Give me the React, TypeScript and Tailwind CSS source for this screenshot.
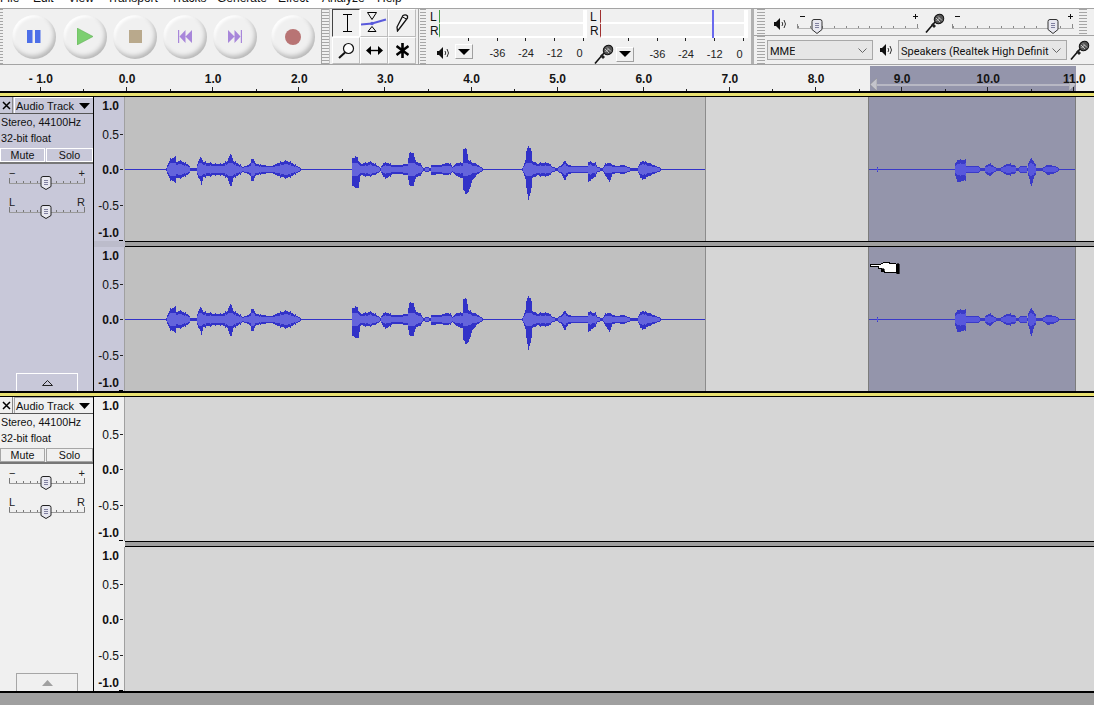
type Pt = [number, number, number];

const clipOne: Pt[] = [
  [125, 0, 0], [165, 0, 0], [166, 1, 1], [168, 6, 6], [170, 10, 10], [175, 12, 12], [176, 7, 8], [180, 8, 8], [184, 6, 6], [188, 4, 4], [190, 1, 1],
  [196, 1, 1], [198, 8, 8], [200, 11, 10], [201, 11, 15], [203, 7, 7], [208, 6, 6], [214, 5, 5], [222, 5, 5], [227, 8, 8], [229, 13, 14], [231, 14, 16], [233, 8, 8], [238, 5, 5], [242, 2, 2],
  [245, 3, 3], [250, 5, 5], [251, 10, 11], [253, 10, 11], [255, 5, 5], [262, 4, 4], [268, 3, 3], [272, 3, 3], [278, 6, 6], [285, 8, 8], [290, 7, 7], [296, 3, 3], [300, 1, 1], [301, 0, 0],
  [351, 0, 0], [352, 11, 16], [357, 12, 18], [358, 8, 18], [360, 5, 5], [366, 6, 6], [370, 7, 6], [376, 4, 4], [380, 1, 1], [383, 6, 7], [387, 6, 8], [392, 4, 4], [398, 4, 4], [407, 5, 5], [409, 16, 15], [413, 16, 16], [415, 8, 8], [420, 5, 5], [423, 1, 1], [426, 2, 2], [430, 1, 1], [431, 4, 5], [440, 4, 4], [446, 6, 5], [450, 5, 4], [452, 2, 2], [456, 6, 6], [462, 6, 8], [463, 20, 20], [466, 20, 24], [468, 9, 22], [472, 6, 10], [476, 5, 5], [480, 2, 2], [482, 1, 1], [483, 0, 0],
  [521, 0, 0], [522, 1, 1], [525, 8, 8], [526, 18, 18], [528, 23, 30], [531, 18, 18], [532, 8, 8], [537, 5, 5], [540, 6, 6], [548, 6, 6], [552, 2, 2], [556, 1, 1], [557, 1, 1], [561, 4, 4], [564, 8, 10], [568, 4, 4], [573, 3, 3], [587, 3, 3], [588, 7, 12], [595, 6, 6], [597, 2, 2], [602, 1, 1], [605, 5, 5], [609, 6, 12], [612, 4, 4], [617, 3, 3], [623, 4, 4], [628, 2, 2], [630, 1, 1], [637, 1, 1], [639, 5, 5], [642, 8, 10], [648, 6, 6], [653, 4, 4], [658, 2, 2], [660, 1, 1], [661, 0, 0], [705, 0, 0],
];

const clipTwo: Pt[] = [
  [869, 0, 0], [876, 0, 0], [877, 2, 2], [878, 0, 0], [954, 0, 0], [955, 5, 5], [957, 9, 12], [965, 9, 10], [966, 3, 3], [978, 3, 3], [980, 1, 1], [984, 1, 1], [986, 4, 4], [989, 5, 6], [993, 3, 3], [996, 1, 1], [1000, 1, 1], [1003, 3, 3], [1007, 5, 5], [1014, 4, 4], [1016, 1, 1], [1018, 1, 1], [1020, 3, 3], [1026, 3, 3], [1027, 1, 1], [1028, 6, 6], [1031, 11, 16], [1034, 6, 6], [1036, 1, 1], [1042, 1, 1], [1045, 3, 3], [1047, 4, 5], [1055, 3, 3], [1058, 1, 1], [1059, 0, 0], [1075, 0, 0],
];

function buildWave(points: Pt[], x0: number) {
  let outer = "";
  let inner = "";
  for (let i = 0; i < points.length - 1; i++) {
    const [xa, ta, ba] = points[i];
    const [xb, tb, bb] = points[i + 1];
    for (let x = xa; x < xb; x++) {
      const k = (x - xa) / (xb - xa);
      const wobble = ta > 4 && (x * 7) % 5 === 0 ? 1 : 0;
      const t = Math.round(ta + (tb - ta) * k) + wobble;
      const b = Math.round(ba + (bb - ba) * k) + wobble;
      const px = x - x0;
      outer += `M${px} ${72 - t}h1V${73 + b}h-1z`;
      if (t >= 2) {
        const r = Math.min(Math.round(t * 0.58), 6);
        inner += `M${px} ${72 - r}h1V${73 + r}h-1z`;
      }
    }
  }
  return { outer, inner };
}

function Wave({ points, x0, width, selected }: { points: Pt[]; x0: number; width: number; selected?: boolean }) {
  const { outer, inner } = buildWave(points, x0);
  return (
    <svg width={width} height={144} className="block" shapeRendering="crispEdges">
      <path d={outer} fill={selected ? "#3a3ac8" : "#3232c8"} />
      <path d={inner} fill={selected ? "#5858dc" : "#6464dc"} />
    </svg>
  );
}

function Grip({ className }: { className: string }) {
  return <div className={`bg-[repeating-linear-gradient(to_bottom,#a6a6a6_0,#a6a6a6_1px,#f0f0f0_1px,#f0f0f0_3px)] ${className}`} />;
}

function RoundButton({ children, className = "" }: { children: React.ReactNode; className?: string }) {
  return (
    <div className={`flex h-[44px] w-[44px] shrink-0 items-center justify-center rounded-full bg-[#f0f0f0] shadow-[inset_-2px_-3px_4px_#b8b8b8,inset_2px_2px_3px_#ffffff] ${className}`}>
      {children}
    </div>
  );
}

function Speaker({ className = "" }: { className?: string }) {
  return (
    <svg width="13" height="14" viewBox="0 0 13 14" className={`shrink-0 ${className}`}>
      <path d="M0 5h2l4-4v12l-4-4H0z" fill="#111" />
      <path d="M8 5q1.500 2 0 4M10 3q3 4 0 8" fill="none" stroke="#333" />
    </svg>
  );
}

function Mic({ className = "" }: { className?: string }) {
  return (
    <svg width="20" height="20" viewBox="0 0 20 20" className={`shrink-0 ${className}`}>
      <path d="M1 19.500 10 9" stroke="#111" strokeWidth="1.600" />
      <path d="M6 12 9 15 11 13 8 10z" fill="#222" />
      <ellipse cx="14" cy="6" rx="4.500" ry="5" transform="rotate(45 14 6)" fill="#555" stroke="#111" />
      <path d="M11 5 15 9M13 3.500 17 7.500M11.500 8l3-3" stroke="#ddd" strokeWidth=".8" />
    </svg>
  );
}

function DropButton() {
  return (
    <div className="flex h-[15px] w-[18px] items-center justify-center border border-t-white border-l-white border-r-[#a0a0a0] border-b-[#a0a0a0]">
      <svg width="12" height="6" viewBox="0 0 12 6">
        <path d="M0 0h12L6 6z" fill="#000" />
      </svg>
    </div>
  );
}

function MeterBar({ label, lineColor, labelWidth, peak }: { label: string; lineColor: string; labelWidth: string; peak?: boolean }) {
  return (
    <div className="flex h-[14px]">
      <div className={`text-[12px] leading-[14px] text-[#111] ${labelWidth}`}>{label}</div>
      <div className={`relative w-[146px] border-b-2 border-l border-r-2 border-b-white border-r-white ${lineColor}`}>
        {peak ? <div className="absolute left-[111px] top-0 bottom-[-2px] w-[2px] bg-[#6a6aee]" /> : null}
      </div>
      <div className="w-[2px] border-r-2 border-white" />
    </div>
  );
}

function Meter({ redLine, icon }: { redLine?: boolean; icon: React.ReactNode }) {
  const labels = ["-36", "-24", "-12"];
  const line = redLine ? "border-l-[#a03030]" : "border-l-[#40a040]";
  const labelWidth = redLine ? "w-[10px]" : "w-[9px]";
  return (
    <div className="flex w-[160px] shrink-0 flex-col pt-[1px]">
      <MeterBar label="L" lineColor={line} labelWidth={labelWidth} peak={redLine} />
      <MeterBar label="R" lineColor={line} labelWidth={labelWidth} peak={redLine} />
      <div className="flex h-[4px] pl-[24px]">
        {[0, 1, 2, 3, 4].map((n) => (
          <div key={n} className="flex w-[28.7px] shrink-0 justify-center">
            <div className="h-[3px] w-px bg-[#222]" />
          </div>
        ))}
      </div>
      <div className="flex items-center pt-[3px]">
        <div className="flex w-[53px] shrink-0 items-center">{icon}</div>
        {labels.map((l) => (
          <div key={l} className="w-[28.7px] shrink-0 text-center text-[11px] leading-[14px] text-[#222]">
            {l}
          </div>
        ))}
        <div className="w-[21px] shrink-0 text-center text-[11px] leading-[14px] text-[#222]">0</div>
      </div>
    </div>
  );
}

function MixerSlider({ thumb }: { thumb: number }) {
  const width = 122;
  const ticks = Array.from({ length: 11 }, (_, i) => 1 + (i * (width - 3)) / 10);
  return (
    <svg width={width} height={22} viewBox={`0 0 ${width} 22`} className="shrink-0" shapeRendering="crispEdges">
      <path d="M3 4.500h5M116 4.500h5M118.500 2v5" stroke="#111" />
      <path d={`M0 16.500H${width}`} stroke="#b4b4b4" />
      {ticks.map((t) => (
        <path key={t} d={`M${Math.round(t)} 13.500v2`} stroke="#888" />
      ))}
      <path d="M0 12v4M120 12v4" stroke="#888" />
      <g shapeRendering="auto">
        <path d={`M${thumb - 5} 9.500q0-2 2-2h6q2 0 2 2v8l-5 4-5-4z`} fill="#e8e8f0" stroke="#333" />
        <path d={`M${thumb - 2} 11.500h4M${thumb - 2} 13.500h4M${thumb - 2} 15.500h4`} stroke="#8080a0" />
      </g>
    </svg>
  );
}

function PanelSlider({ left, right, className }: { left: string; right: string; className: string }) {
  return (
    <div className={`ml-[9px] w-[76px] ${className}`}>
      <div className="flex h-[12px] justify-between text-[11px] leading-[12px] text-[#222]">
        <span>{left}</span>
        <span>{right}</span>
      </div>
      <svg width={76} height={15} viewBox="0 0 76 15" className="-mt-[4px] block" shapeRendering="crispEdges">
        <path d="M0 8.500H76" stroke="#9a9a9a" />
        {[7, 14, 21, 28, 47, 54, 61, 68].map((t) => (
          <path key={t} d={`M${t} 5.500v2`} stroke="#777" />
        ))}
        <path d="M.5 3v5M75.500 3v5" stroke="#777" />
        <g shapeRendering="auto">
          <path d="M32 3.500q0-2 2-2h6q2 0 2 2v8l-5 3-5-3z" fill="#e8e8f0" stroke="#222" />
          <path d="M35 5.500h4M35 7.500h4M35 9.500h4" stroke="#8080a0" />
        </g>
      </svg>
    </div>
  );
}

function Combo({ text, className }: { text: string; className: string }) {
  return (
    <div className={`flex h-[20px] shrink-0 items-center justify-between border border-[#a8a8a8] bg-[#e6e6e6] pl-[2px] pr-[5px] text-[11px] text-[#111] [font-family:Roboto,sans-serif] ${className}`}>
      <span className="mt-[2px] overflow-hidden whitespace-nowrap leading-none">{text}</span>
      <svg width="9" height="5" viewBox="0 0 9 5" className="ml-[3px] shrink-0">
        <path d="M.5.500 4.500 4.500 8.500.5" fill="none" stroke="#666" />
      </svg>
    </div>
  );
}

function ToolCell({ active, children }: { active?: boolean; children: React.ReactNode }) {
  return (
    <div
      className={`flex items-center justify-center border ${
        active ? "border-t-[#444] border-l-[#444] border-r-white border-b-white" : "border-t-white border-l-white border-r-[#bcbcbc] border-b-[#bcbcbc]"
      }`}
    >
      {children}
    </div>
  );
}

function Toolbar() {
  return (
    <div className="flex h-[57px] border-y border-[#a4a4a4] bg-[#f0f0f0]">
      <div className="flex w-[322px] shrink-0 border-r border-[#a4a4a4]">
        <Grip className="w-[3px]" />
        <div className="flex items-center pl-[9px]">
          <RoundButton>
            <svg width="14" height="13" viewBox="0 0 14 13">
              <path d="M0 0h5.500v13H0zM8 0h5.500v13H8z" fill="#4d6fe8" />
            </svg>
          </RoundButton>
          <RoundButton className="ml-[7px]">
            <svg width="16" height="17" viewBox="0 0 16 17">
              <path d="M0 0l16 8.500L0 17z" fill="#7ccf70" stroke="#62b058" strokeWidth=".6" />
            </svg>
          </RoundButton>
          <RoundButton className="ml-[6px]">
            <div className="h-[13px] w-[13px] bg-[#b9a98c]" />
          </RoundButton>
          <RoundButton className="ml-[6px]">
            <svg width="14" height="13" viewBox="0 0 14 13">
              <path d="M0 0h1.200v13H0zM1.500 6.500 7.500 0v13zM7.500 6.500 14 0v13z" fill="#a886da" />
            </svg>
          </RoundButton>
          <RoundButton className="ml-[6px]">
            <svg width="14" height="13" viewBox="0 0 14 13">
              <path d="M12.800 0H14v13h-1.200zM12.500 6.500 6.500 0v13zM6.500 6.500 0 0v13z" fill="#a886da" />
            </svg>
          </RoundButton>
          <RoundButton className="ml-[14px]">
            <div className="h-[16px] w-[16px] rounded-full bg-[#b87474]" />
          </RoundButton>
        </div>
      </div>

      <div className="flex w-[97px] shrink-0 border-r border-[#a4a4a4]">
        <Grip className="w-[8px] border-r border-[#c4c4c4]" />
        <div className="ml-[2px] grid w-[84px] grid-cols-3 grid-rows-2">
          <ToolCell active>
            <svg width="11" height="18" viewBox="0 0 11 18" className="ml-[3px]">
              <path d="M1 .500h9M5.500.5v17M1 17.500h9" stroke="#000" fill="none" />
            </svg>
          </ToolCell>
          <ToolCell>
            <svg width="26" height="24" viewBox="0 0 26 24">
              <path d="M6.500 1.500h9l-4.500 7zM7 20.500h8l-4-5z" fill="none" stroke="#000" />
              <path d="M0 13.500l11-1 14-4" stroke="#5a5adc" strokeWidth="2.200" fill="none" />
              <circle cx="11" cy="12.500" r="1.800" fill="#5a5adc" />
            </svg>
          </ToolCell>
          <ToolCell>
            <svg width="14" height="19" viewBox="0 0 14 19">
              <path d="M4.500 15.500 2.500 18 2 14 8 2.500q2.500-1.500 4.500.5V5z" fill="#f4f4f4" stroke="#111" strokeWidth="1.300" />
              <path d="M7.500 4 11.500 6" stroke="#111" />
            </svg>
          </ToolCell>
          <ToolCell>
            <svg width="17" height="17" viewBox="0 0 17 17">
              <circle cx="10.500" cy="6.500" r="5" fill="#fff" stroke="#111" strokeWidth="1.200" />
              <path d="M7 10.500 1 16" stroke="#111" strokeWidth="2" />
            </svg>
          </ToolCell>
          <ToolCell>
            <svg width="17" height="9" viewBox="0 0 17 9">
              <path d="M4 4.500h9" stroke="#000" strokeWidth="1.400" />
              <path d="M0 4.500 5 0v9zM17 4.500 12 0v9z" fill="#000" />
            </svg>
          </ToolCell>
          <ToolCell>
            <svg width="13" height="15" viewBox="0 0 13 15">
              <path d="M6.500 0v15M.5 3l12 9M12.500 3 .5 12" stroke="#000" strokeWidth="2.600" />
            </svg>
          </ToolCell>
        </div>
      </div>

      <div className="ml-[1px] flex w-[333px] shrink-0 border-r-2 border-[#b0b0b0]">
        <Grip className="w-[6px]" />
        <div className="ml-[4px] flex">
          <Meter
            icon={
              <>
                <Speaker className="ml-[7px]" />
                <div className="ml-[5px] -translate-y-[1px]">
                  <DropButton />
                </div>
              </>
            }
          />
          <Meter
            redLine
            icon={
              <>
                <Mic className="ml-[4px]" />
                <div className="ml-[2px]">
                  <DropButton />
                </div>
              </>
            }
          />
        </div>
      </div>

      <div className="flex min-w-0 flex-1 flex-col border-l border-[#b0b0b0]">
        <div className="flex h-[27px] border-b border-[#a4a4a4] pr-[2px]">
          <Grip className="ml-[3px] w-[8px]" />
          <Speaker className="ml-[9px] mt-[8px]" />
          <div className="ml-[10px] mt-[3px]">
            <MixerSlider thumb={20} />
          </div>
          <Mic className="ml-[6px] mt-[4px]" />
          <div className="ml-[7px] mt-[3px]">
            <MixerSlider thumb={101} />
          </div>
          <Grip className="ml-[5px] w-[8px]" />
        </div>
        <div className="flex flex-1 items-center">
          <Grip className="ml-[3px] h-full w-[8px]" />
          <Combo text="MME" className="ml-[2px] w-[106px]" />
          <Speaker className="ml-[7px]" />
          <Combo text="Speakers (Realtek High Definit" className="ml-[5px] w-[169px]" />
          <Mic className="ml-[3px]" />
        </div>
      </div>
    </div>
  );
}

function Ruler() {
  const labels = ["- 1.0", "0.0", "1.0", "2.0", "3.0", "4.0", "5.0", "6.0", "7.0", "8.0", "9.0", "10.0", "11.0"];
  return (
    <div className="relative h-[26px] overflow-hidden bg-[#f0f0f0]">
      <div className="absolute bottom-0 left-[870px] top-[1px] w-[206px] bg-[#9495ab]">
        <div className="absolute left-[5px] right-[5px] top-[18px] h-[2px] bg-[#b8b8c4]" />
        <svg width="7" height="13" viewBox="0 0 7 13" className="absolute left-0 top-[12px]">
          <path d="M7 0v13L0 6.500z" fill="#c4c4cc" stroke="#888" strokeWidth=".5" />
        </svg>
        <svg width="7" height="13" viewBox="0 0 7 13" className="absolute right-0 top-[12px]">
          <path d="M0 0v13L7 6.500z" fill="#c4c4cc" stroke="#888" strokeWidth=".5" />
        </svg>
      </div>
      <div className="relative ml-[-2.7px] flex h-full">
        {labels.map((l) => (
          <div key={l} className="flex w-[86.14px] shrink-0 flex-col justify-end">
            <div className="mb-[1px] ml-[1px] whitespace-nowrap text-center text-[12px] font-bold leading-[14px] text-[#151515]">{l}</div>
            <div className="flex h-[4px] items-end justify-between">
              <div className="h-[2px] w-px bg-[#222]" />
              <div className="h-[4px] w-px bg-[#222]" />
              <div className="w-px" />
            </div>
          </div>
        ))}
      </div>
    </div>
  );
}

function TrackSeparator() {
  return (
    <div className="border-b border-t-2 border-black">
      <div className="h-[3px] bg-[#e8e070]" />
    </div>
  );
}

function ScaleRow({ text, height, bold, tick }: { text: string; height: string; bold?: boolean; tick?: boolean }) {
  return (
    <div className={`flex items-center justify-end ${height}`}>
      <span className={`text-[12px] leading-none text-[#111] ${bold ? "font-bold" : ""}`}>{text}</span>
      <div className={`ml-[1px] mr-[1px] h-px w-[3px] ${tick ? "bg-[#222]" : ""}`} />
    </div>
  );
}

function Channel({ selected, wave, cursor }: { selected?: boolean; wave?: boolean; cursor?: boolean }) {
  return (
    <div className="flex h-[144px]">
      <div className={`w-[31px] shrink-0 border-r border-[#a0a0a0] ${selected ? "bg-[#c8c8d9]" : "bg-[#f0f0f0]"}`}>
        <ScaleRow text="1.0" height="h-[17px]" bold />
        <ScaleRow text="0.5" height="h-[41px]" tick />
        <ScaleRow text="0.0" height="h-[29px]" bold tick />
        <ScaleRow text="-0.5" height="h-[43px]" tick />
        <ScaleRow text="-1.0" height="h-[11px]" bold />
        <div className="ml-[25px] mt-[2px] h-px w-[4px] bg-black" />
      </div>
      {wave ? (
        <>
          <div className="w-[581px] shrink-0 border-r border-[#8c8c8c] bg-[#c0c0c0]">
            <Wave points={clipOne} x0={125} width={580} />
          </div>
          <div className="w-[162px] shrink-0 bg-[#d6d6d6]" />
          <div className="relative w-[208px] shrink-0 border-x border-[#7c7c7c] bg-[#9495ab]">
            <Wave points={clipTwo} x0={869} width={206} selected />
            {cursor ? (
              <svg width="30" height="15" viewBox="0 0 30 15" className="absolute left-[1px] top-[14px]" shapeRendering="crispEdges">
                <path d="M.500 3.500h10l3-2h6v1h6l1 1v8h-12v-1h-3v-3h-3v-2h-8z" fill="#fff" stroke="#000" />
                <path d="M27 2.500v10h2v-10zM26 12.500h3M11 7.500h3v2h-3z" fill="#000" stroke="#000" strokeWidth=".6" />
              </svg>
            ) : null}
          </div>
          <div className="flex-1 bg-[#d6d6d6]" />
        </>
      ) : (
        <div className="flex-1 bg-[#d6d6d6]" />
      )}
    </div>
  );
}

function TrackPanel({ selected }: { selected?: boolean }) {
  const line = selected ? "border-white" : "border-[#a6a6a6]";
  return (
    <div className={`flex w-[94px] shrink-0 flex-col border-r border-black text-[10.7px] leading-[16px] text-[#111] ${selected ? "bg-[#c8c8d9]" : "bg-[#f0f0f0]"}`}>
      <div className="flex h-[17px] border-b border-[#555]">
        <div className="flex w-[13px] items-center justify-center border-r border-[#888]">
          <svg width="9" height="9" viewBox="0 0 9 9">
            <path d="M1 1l7 7M8 1 1 8" stroke="#000" strokeWidth="1.500" />
          </svg>
        </div>
        <div className={`ml-[1px] flex flex-1 items-center justify-between border-l border-t pl-[1px] pr-[3px] ${line}`}>
          <span className="text-[11px]">Audio Track</span>
          <svg width="11" height="6" viewBox="0 0 11 6">
            <path d="M0 0h11L5.500 6z" fill="#000" />
          </svg>
        </div>
      </div>
      <div className="pl-px">Stereo, 44100Hz</div>
      <div className="pl-px">32-bit float</div>
      <div className="mt-[2px] flex h-[16px] border-b-2 border-[#777]">
        <div className={`flex w-[45px] items-center justify-center border ${line}`}>Mute</div>
        <div className={`ml-px flex flex-1 items-center justify-center border ${line}`}>Solo</div>
      </div>
      <PanelSlider left="−" right="+" className="mt-[3px]" />
      <PanelSlider left="L" right="R" className="mt-[6px]" />
      <div className={`ml-[16px] mt-auto flex h-[18px] w-[62px] items-center justify-center border border-b-0 ${line}`}>
        <svg width="11" height="6" viewBox="0 0 11 6">
          {selected ? <path d="M.500 5.500 5.500.5l5 5z" fill="none" stroke="#222" /> : <path d="M0 6 5.500 0 11 6z" fill="#a0a0a0" />}
        </svg>
      </div>
    </div>
  );
}

function Track({ selected, withWave }: { selected?: boolean; withWave?: boolean }) {
  return (
    <div className="flex h-[294px]">
      <TrackPanel selected={selected} />
      <div className="min-w-0 flex-1">
        <Channel selected={selected} wave={withWave} />
        <div className="flex h-[6px]">
          <div className={`w-[31px] shrink-0 ${selected ? "bg-[#bcbccb]" : "bg-[#f0f0f0]"}`} />
          <div className="flex-1 border-y border-black bg-[#a0a0a0]" />
        </div>
        <Channel selected={selected} wave={withWave} cursor={withWave} />
      </div>
    </div>
  );
}

export default function App() {
  return (
    <div className="h-[705px] w-[1094px] overflow-hidden bg-[#a0a0a0] [font-family:'Liberation_Sans',Arial,sans-serif]">
      <div className="h-[8px] overflow-hidden bg-white">
        <div className="-mt-[9px] flex text-[12px] leading-[14px] text-[#111]">
          {[
            ["File", "w-[33px]"],
            ["Edit", "w-[35px]"],
            ["View", "w-[39px]"],
            ["Transport", "w-[64px]"],
            ["Tracks", "w-[46px]"],
            ["Generate", "w-[61px]"],
            ["Effect", "w-[44px]"],
            ["Analyze", "w-[55px]"],
            ["Help", "w-[40px]"],
          ].map(([name, w]) => (
            <span key={name} className={w}>
              {name}
            </span>
          ))}
        </div>
      </div>
      <Toolbar />
      <Ruler />
      <TrackSeparator />
      <Track selected withWave />
      <TrackSeparator />
      <Track />
      <div className="h-[2px] bg-black" />
    </div>
  );
}
